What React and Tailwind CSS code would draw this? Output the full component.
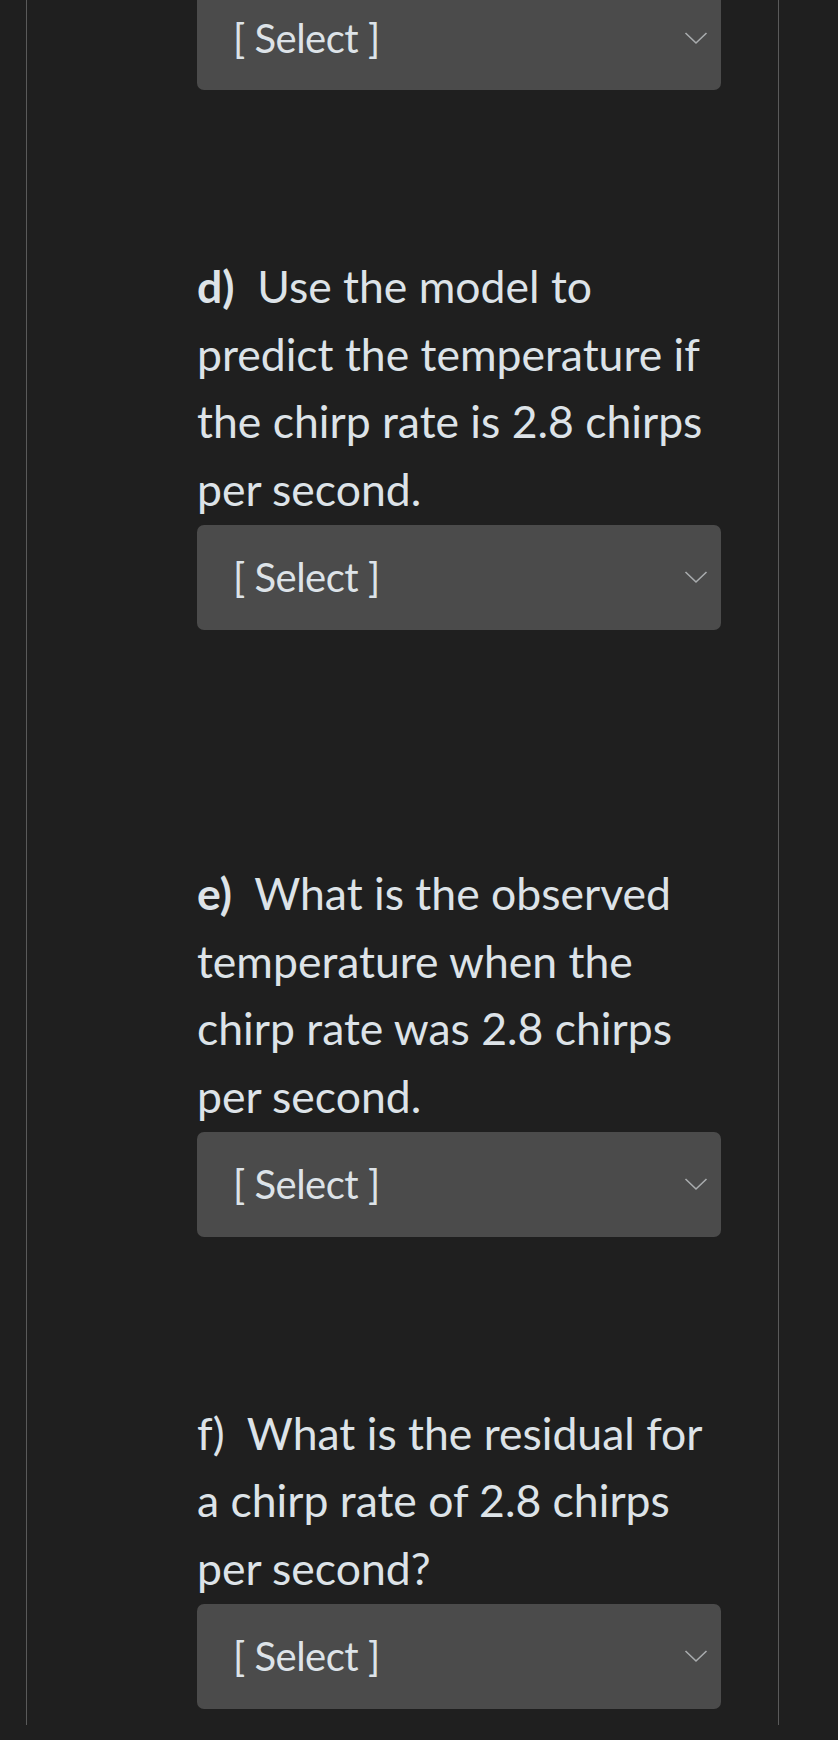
import React from "react";

function Chevron() {
  return (
    <svg width="24" height="14" viewBox="0 0 24 14" fill="none" className="shrink-0">
      <path d="M1.5 2 L12 12 L22.5 2" stroke="#a9acae" strokeWidth="1.6" />
    </svg>
  );
}

function Select({ className = "" }) {
  return (
    <div
      className={
        "h-[105px] w-[524px] rounded-[7px] bg-[#4b4b4b] flex items-center justify-between pl-[36px] pr-[13px] " +
        className
      }
    >
      <span className="text-[40px] text-[#dde3e8] tracking-[-0.5px]">[ Select ]</span>
      <Chevron />
    </div>
  );
}

export default function App() {
  return (
    <div
      className="h-[1740px] w-full bg-[#1f1f1f] overflow-hidden"
      style={{ fontFamily: "Lato, 'Open Sans', sans-serif" }}
    >
      <div className="ml-[26px] w-[753px] h-full border-l border-r border-[#5a5a5a] pl-[170px]">
        <Select className="-mt-[15px]" />

        <div className="mt-[162px] w-[526px] text-[44.5px] leading-[67.7px] text-[#dde3e8]">
          <span className="font-bold">d)</span>&nbsp; Use the model to predict the temperature if the chirp rate is 2.8 chirps per second.
        </div>
        <Select className="mt-[2px]" />

        <div className="mt-[229px] w-[526px] text-[44.5px] leading-[67.7px] text-[#dde3e8]">
          <span className="font-bold">e)</span>&nbsp; What is the observed temperature when the chirp rate was 2.8 chirps per second.
        </div>
        <Select className="mt-[2px]" />

        <div className="mt-[162px] w-[526px] text-[44.5px] leading-[67.7px] text-[#dde3e8]">
          f)&nbsp; What is the residual for a chirp rate of 2.8 chirps per second?
        </div>
        <Select className="mt-[2px]" />
      </div>
    </div>
  );
}
